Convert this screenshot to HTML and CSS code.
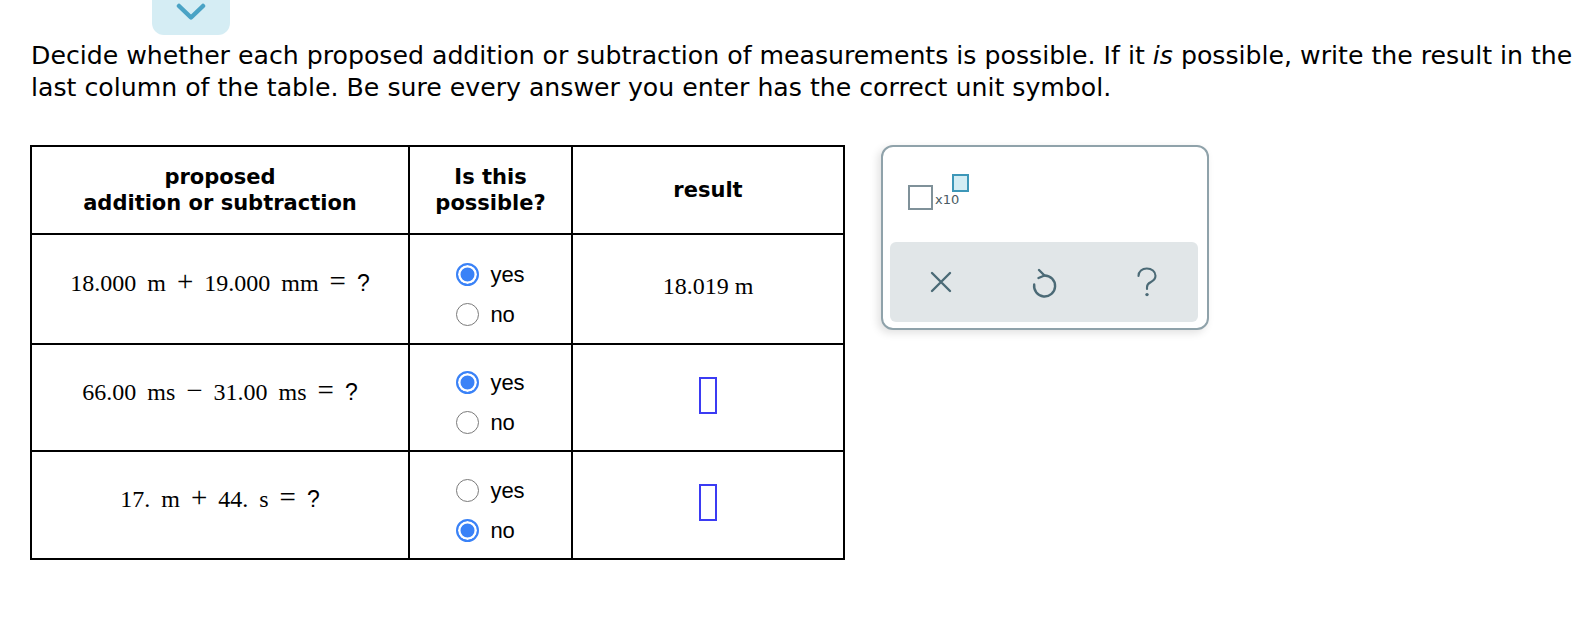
FILE: index.html
```html
<!DOCTYPE html>
<html lang="en">
<head>
    <meta charset="UTF-8">
    <title>Adding and subtracting measurements</title>
    <meta name="viewport" content="width=device-width, initial-scale=1.0">
    <link rel="stylesheet" href="styles.css">
</head>
<body>

<div class="top-tab">
    <svg width="30" height="18" viewBox="0 0 30 18">
        <polyline points="3,3 15,14.5 27,3" fill="none" stroke="#4aa3c5" stroke-width="4.5" stroke-linecap="round" stroke-linejoin="round"/>
    </svg>
</div>

<p class="prompt">Decide whether each proposed addition or subtraction of measurements is possible. If it <em>is</em> possible, write the result in the last column of the table. Be sure every answer you enter has the correct unit symbol.</p>

<div class="workarea">
    <table class="grid">
        <colgroup>
            <col class="c-expr">
            <col class="c-poss">
            <col class="c-res">
        </colgroup>
        <tr class="head">
            <th>proposed<br>addition or subtraction</th>
            <th>Is this<br>possible?</th>
            <th>result</th>
        </tr>
        <tr class="row-1">
            <td class="expr">18.000 m <span class="op">+</span> 19.000 mm <span class="op">=</span> <span class="q">?</span></td>
            <td class="choice">
                <div class="choices">
                    <label><input type="radio" name="r1" checked> yes</label>
                    <label><input type="radio" name="r1"> no</label>
                </div>
            </td>
            <td class="result">18.019 m</td>
        </tr>
        <tr class="row-2">
            <td class="expr">66.00 ms <span class="op">−</span> 31.00 ms <span class="op">=</span> <span class="q">?</span></td>
            <td class="choice">
                <div class="choices">
                    <label><input type="radio" name="r2" checked> yes</label>
                    <label><input type="radio" name="r2"> no</label>
                </div>
            </td>
            <td class="result"><span class="answer-box"></span></td>
        </tr>
        <tr class="row-3">
            <td class="expr">17. m <span class="op">+</span> 44. s <span class="op">=</span> <span class="q">?</span></td>
            <td class="choice">
                <div class="choices">
                    <label><input type="radio" name="r3"> yes</label>
                    <label><input type="radio" name="r3" checked> no</label>
                </div>
            </td>
            <td class="result"><span class="answer-box"></span></td>
        </tr>
    </table>

    <div class="tool-panel">
        <div class="sci">
            <span class="sci-base"></span>
            <span class="sci-x">x10</span>
            <span class="sci-exp"></span>
        </div>
        <div class="tool-bar">
            <button class="tool" title="Clear">
                <svg width="22" height="22" viewBox="0 0 22 22">
                    <path d="M2 2 L20 20 M20 2 L2 20" fill="none" stroke="#4b6a76" stroke-width="2.4" stroke-linecap="round"/>
                </svg>
            </button>
            <button class="tool" title="Undo">
                <svg width="28" height="34" viewBox="0 0 28 34">
                    <path d="M14.5 10.5 A10.5 10.5 0 1 1 4.2 19.5" fill="none" stroke="#4b6a76" stroke-width="2.4" stroke-linecap="round"/>
                    <polyline points="9,5 14.5,10.5 8.5,13" fill="none" stroke="#4b6a76" stroke-width="2.4" stroke-linecap="round" stroke-linejoin="round"/>
                </svg>
            </button>
            <button class="tool" title="Help">
                <svg width="24" height="32" viewBox="0 0 24 32">
                    <path d="M3.5 10 C3.5 5.2 7.2 2.5 11.8 2.5 C16.6 2.5 20.5 5.3 20.5 9.8 C20.5 13.4 18 15 15.6 16.2 C13.3 17.3 12 18.6 12 21.2 V23" fill="none" stroke="#4b6a76" stroke-width="2.1" stroke-linecap="round"/>
                    <circle cx="12" cy="28.6" r="1.7" fill="#4b6a76"/>
                </svg>
            </button>
        </div>
    </div>
</div>

</body>
</html>
```

FILE: styles.css
```css
* {
    box-sizing: border-box;
}

body {
    margin: 0;
    background: #fff;
    color: #000;
    font-family: 'DejaVu Sans', Verdana, sans-serif;
}

.top-tab {
    width: 78px;
    height: 35px;
    margin-left: 152px;
    padding-top: 3px;
    background: #d5edf4;
    border-radius: 0 0 12px 12px;
    display: flex;
    justify-content: center;
    align-items: flex-start;
}

.prompt {
    margin: 5px 0 0 31px;
    width: 1551px;
    font-size: 25.2px;
    line-height: 32px;
}

.prompt em {
    font-style: italic;
}

.workarea {
    display: flex;
    align-items: flex-start;
    margin-top: 41px;
    padding-left: 30px;
}

.grid {
    border-collapse: collapse;
    table-layout: fixed;
    width: 813px;
}

.c-expr { width: 378px; }
.c-poss { width: 163px; }
.c-res { width: 272px; }

.grid th,
.grid td {
    border: 2px solid #000;
    padding: 0;
    text-align: center;
    vertical-align: middle;
}

.grid th {
    font-weight: bold;
    font-size: 21px;
    line-height: 26px;
}

.head { height: 88px; }
.row-1 { height: 110px; }
.row-2 { height: 107px; }
.row-3 { height: 108px; }

.expr {
    font-family: 'Liberation Serif', 'Times New Roman', serif;
    font-size: 24px;
    line-height: 28px;
    word-spacing: 5px;
    padding-bottom: 12px !important;
}

.expr .op {
    font-size: 29px;
    line-height: 20px;
}

.expr .q {
    font-family: 'Liberation Sans', Arial, sans-serif;
    font-size: 23px;
}

.choice {
    padding-top: 10px !important;
}

.choices {
    display: inline-flex;
    flex-direction: column;
    align-items: flex-start;
    gap: 17px;
}

.choices label {
    display: flex;
    align-items: center;
    gap: 11px;
    font-family: 'Liberation Sans', Arial, sans-serif;
    font-size: 22px;
    line-height: 23px;
}

.choices input {
    appearance: none;
    -webkit-appearance: none;
    width: 23px;
    height: 23px;
    margin: 0;
    border: 1.6px solid #7a7a7a;
    border-radius: 50%;
    background: #fff;
}

.choices input:checked {
    border: 2px solid #3a82f7;
    background: #3a82f7;
    box-shadow: inset 0 0 0 2.5px #fff;
}

.result {
    font-family: 'Liberation Serif', 'Times New Roman', serif;
    font-size: 24px;
    padding-bottom: 5px !important;
}

.answer-box {
    display: inline-block;
    width: 18px;
    height: 37px;
    border: 2px solid #3b3bf3;
    vertical-align: middle;
}

.tool-panel {
    margin-left: 36px;
    width: 328px;
    height: 185px;
    border: 2px solid #8fa2aa;
    border-radius: 12px;
    background: #fff;
    box-shadow: -3px 3px 8px rgba(0,0,0,0.12);
    display: flex;
    flex-direction: column;
}

.sci {
    height: 95px;
    padding: 27px 0 0 25px;
    display: flex;
    align-items: flex-start;
}

.sci-base {
    width: 25px;
    height: 25px;
    margin-top: 11px;
    border: 2px solid #7f9199;
}

.sci-x {
    margin: 19px 0 0 2px;
    font-size: 13px;
    line-height: 14px;
    color: #4a5b63;
}

.sci-exp {
    width: 17px;
    height: 18px;
    margin-left: -7px;
    border: 2px solid #3d97b8;
    background: #d3edf4;
}

.tool-bar {
    height: 80px;
    margin: 0 9px 0 7px;
    background: #e1e6e8;
    border-radius: 6px;
    display: flex;
}

.tool {
    flex: 1;
    border: none;
    background: none;
    padding: 0;
    display: flex;
    justify-content: center;
    align-items: center;
    cursor: pointer;
}
```
